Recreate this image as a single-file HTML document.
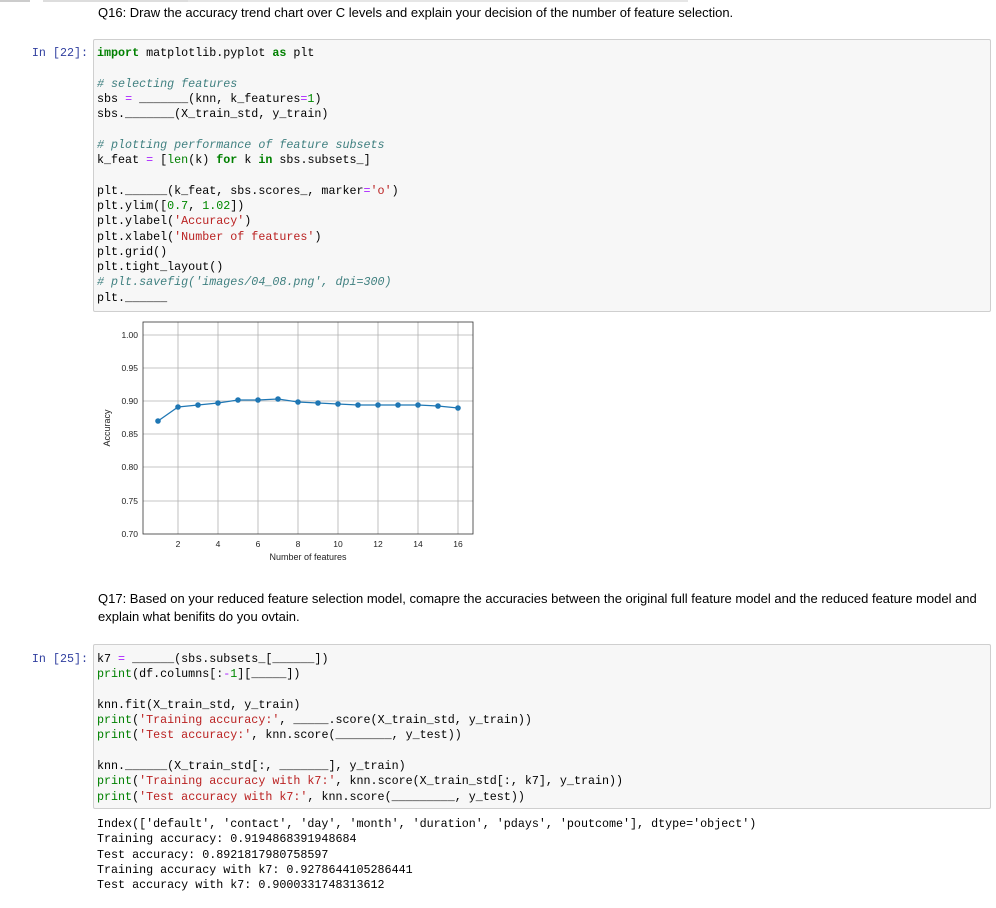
<!DOCTYPE html>
<html><head><meta charset="utf-8"><style>
body{margin:0;width:996px;height:908px;background:#fff;position:relative;overflow:hidden;font-family:"Liberation Sans",Arial,sans-serif;}
.md{position:absolute;left:98px;font-size:13px;color:#000;letter-spacing:0;line-height:18px;}
.prompt{position:absolute;left:0;width:88px;text-align:right;font-family:"Liberation Mono",monospace;font-size:11.7px;color:#303F9F;}
.box{position:absolute;left:93px;width:896px;background:#f7f7f7;border:1px solid #cfcfcf;border-radius:2px;}
pre{margin:0;font-family:"Liberation Mono",monospace;font-size:11.7px;line-height:15.3px;color:#000;white-space:pre;}
.code{position:absolute;left:97px;}
.k{color:#008000;font-weight:bold}.c{color:#408080;font-style:italic}.s{color:#BA2121}.n{color:#080}.o{color:#AA22FF}.b{color:#008000}
</style></head><body>
<div style="position:absolute;left:0;top:0;width:30px;height:2px;background:#ccc"></div>
<div style="position:absolute;left:43px;top:0;width:150px;height:2px;background:#ddd"></div>
<div style="position:absolute;left:188px;top:0;width:500px;height:2px;background:#e6e6e6"></div>
<div class="md" style="top:4px">Q16: Draw the accuracy trend chart over C levels and explain your decision of the number of feature selection.</div>

<div class="prompt" style="top:46px">In [22]:</div>
<div class="box" style="top:39px;height:271px"></div>
<pre class="code" style="top:46px"><span class="k">import</span> matplotlib.pyplot <span class="k">as</span> plt

<span class="c"># selecting features</span>
sbs <span class="o">=</span> _______(knn, k_features<span class="o">=</span><span class="n">1</span>)
sbs._______(X_train_std, y_train)

<span class="c"># plotting performance of feature subsets</span>
k_feat <span class="o">=</span> [<span class="b">len</span>(k) <span class="k">for</span> k <span class="k">in</span> sbs.subsets_]

plt.______(k_feat, sbs.scores_, marker<span class="o">=</span><span class="s">'o'</span>)
plt.ylim([<span class="n">0.7</span>, <span class="n">1.02</span>])
plt.ylabel(<span class="s">'Accuracy'</span>)
plt.xlabel(<span class="s">'Number of features'</span>)
plt.grid()
plt.tight_layout()
<span class="c"># plt.savefig('images/04_08.png', dpi=300)</span>
plt.______</pre>

<svg style="position:absolute;left:0;top:0" width="996" height="580" font-family="Liberation Sans, sans-serif" font-size="8.5" fill="#222">
<g stroke="#b0b0b0" stroke-width="0.8">
<line x1="178" y1="322" x2="178" y2="534"/><line x1="218" y1="322" x2="218" y2="534"/><line x1="258" y1="322" x2="258" y2="534"/><line x1="298" y1="322" x2="298" y2="534"/><line x1="338" y1="322" x2="338" y2="534"/><line x1="378" y1="322" x2="378" y2="534"/><line x1="418" y1="322" x2="418" y2="534"/><line x1="458" y1="322" x2="458" y2="534"/>
<line x1="143" y1="335" x2="473" y2="335"/><line x1="143" y1="368" x2="473" y2="368"/><line x1="143" y1="401" x2="473" y2="401"/><line x1="143" y1="434" x2="473" y2="434"/><line x1="143" y1="467" x2="473" y2="467"/><line x1="143" y1="501" x2="473" y2="501"/>
</g>
<rect x="143" y="322" width="330" height="212" fill="none" stroke="#333" stroke-width="0.8"/>
<g text-anchor="end">
<text x="138" y="338">1.00</text><text x="138" y="371">0.95</text><text x="138" y="404">0.90</text><text x="138" y="437">0.85</text><text x="138" y="470">0.80</text><text x="138" y="504">0.75</text><text x="138" y="537">0.70</text>
</g>
<g text-anchor="middle">
<text x="178" y="547">2</text><text x="218" y="547">4</text><text x="258" y="547">6</text><text x="298" y="547">8</text><text x="338" y="547">10</text><text x="378" y="547">12</text><text x="418" y="547">14</text><text x="458" y="547">16</text>
<text x="308" y="560" font-size="9">Number of features</text>
<text transform="translate(110,428) rotate(-90)" font-size="9">Accuracy</text>
</g>
<polyline fill="none" stroke="#1f77b4" stroke-width="1.3" points="158,421 178,407 198,405 218,403 238,400 258,400 278,399 298,402 318,403 338,404 358,405 378,405 398,405 418,405 438,406 458,408"/>
<g fill="#1f77b4">
<circle cx="158" cy="421" r="2.8"/><circle cx="178" cy="407" r="2.8"/><circle cx="198" cy="405" r="2.8"/><circle cx="218" cy="403" r="2.8"/><circle cx="238" cy="400" r="2.8"/><circle cx="258" cy="400" r="2.8"/><circle cx="278" cy="399" r="2.8"/><circle cx="298" cy="402" r="2.8"/><circle cx="318" cy="403" r="2.8"/><circle cx="338" cy="404" r="2.8"/><circle cx="358" cy="405" r="2.8"/><circle cx="378" cy="405" r="2.8"/><circle cx="398" cy="405" r="2.8"/><circle cx="418" cy="405" r="2.8"/><circle cx="438" cy="406" r="2.8"/><circle cx="458" cy="408" r="2.8"/>
</g>
</svg>

<div class="md" style="top:590px">Q17: Based on your reduced feature selection model, comapre the accuracies between the original full feature model and the reduced feature model and<br>explain what benifits do you ovtain.</div>

<div class="prompt" style="top:652px">In [25]:</div>
<div class="box" style="top:644px;height:163px"></div>
<pre class="code" style="top:652px">k7 <span class="o">=</span> ______(sbs.subsets_[______])
<span class="b">print</span>(df.columns[:<span class="o">-</span><span class="n">1</span>][_____])

knn.fit(X_train_std, y_train)
<span class="b">print</span>(<span class="s">'Training accuracy:'</span>, _____.score(X_train_std, y_train))
<span class="b">print</span>(<span class="s">'Test accuracy:'</span>, knn.score(________, y_test))

knn.______(X_train_std[:, _______], y_train)
<span class="b">print</span>(<span class="s">'Training accuracy with k7:'</span>, knn.score(X_train_std[:, k7], y_train))
<span class="b">print</span>(<span class="s">'Test accuracy with k7:'</span>, knn.score(_________, y_test))</pre>

<pre class="code" style="top:817px">Index(['default', 'contact', 'day', 'month', 'duration', 'pdays', 'poutcome'], dtype='object')
Training accuracy: 0.9194868391948684
Test accuracy: 0.8921817980758597
Training accuracy with k7: 0.9278644105286441
Test accuracy with k7: 0.9000331748313612</pre>
</body></html>
